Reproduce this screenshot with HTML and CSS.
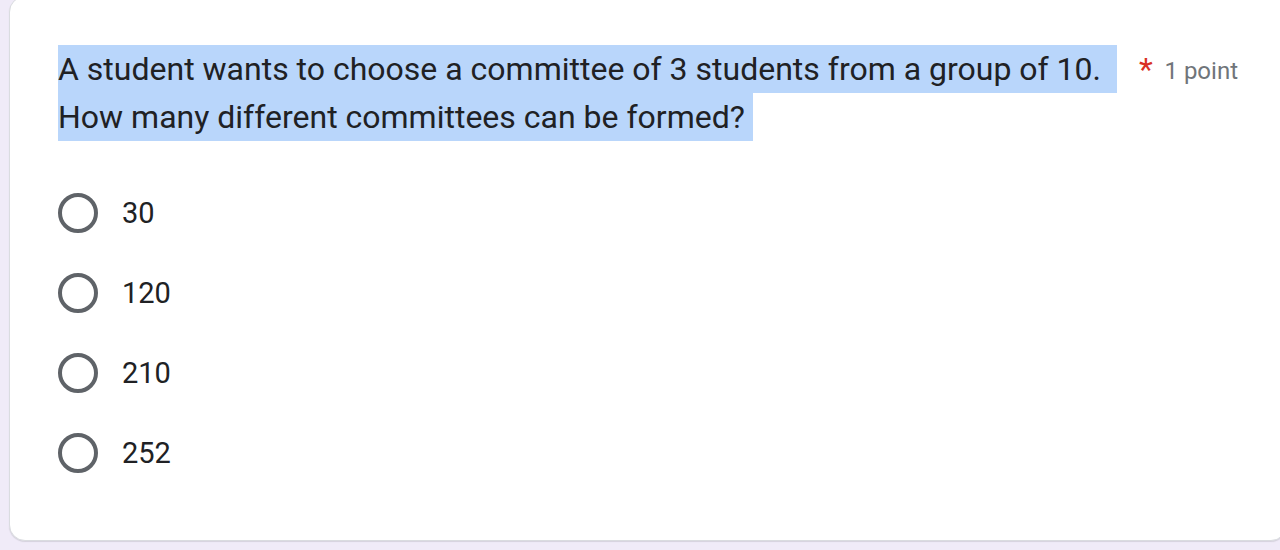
FILE: index.html
```html
<!DOCTYPE html>
<html lang="en">
<head>
<meta charset="utf-8">
<title>Question</title>
<link rel="stylesheet" href="styles.css">
</head>
<body>
<div class="card">
  <div class="header">
    <div class="title"><span class="hl">A student wants to choose a committee of 3 students from a group of 10.&nbsp;&nbsp;<br>How many different committees can be formed?&nbsp;</span></div>
    <span class="req">*</span>
    <span class="points">1 point</span>
  </div>
  <div class="options">
    <label class="option"><span class="radio"></span><span class="opt-text">30</span></label>
    <label class="option"><span class="radio"></span><span class="opt-text">120</span></label>
    <label class="option"><span class="radio"></span><span class="opt-text">210</span></label>
    <label class="option"><span class="radio"></span><span class="opt-text">252</span></label>
  </div>
</div>
</body>
</html>
```
FILE: styles.css
```css
html, body {
  margin: 0;
  padding: 0;
  background: #f0ebf8;
  overflow: hidden;
  width: 1280px;
  height: 550px;
}
body {
  font-family: Roboto, "Noto Sans", Arial, sans-serif;
  color: #202124;
}
.card {
  box-sizing: border-box;
  margin-left: 9px;
  margin-top: -4px;
  width: 1278px;
  background: #fff;
  border: 1px solid #dadce0;
  border-radius: 16px;
  padding: 48px 48px 47px 48px;
  box-shadow: 0 1px 1px rgba(60,64,67,0.15);
}
.header {
  display: flex;
  align-items: flex-start;
}
.title {
  flex: 0 0 auto;
  white-space: nowrap;
  font-size: 32px;
  line-height: 48px;
}
.hl {
  background: #b9d6fb;
  padding: 5.25px 0;
}
.req {
  color: #d93025;
  font-size: 32px;
  line-height: 48px;
  margin-left: 22px;
}
.points {
  color: #70757a;
  font-size: 24px;
  line-height: 48px;
  padding-top: 2px;
  margin-left: auto;
  white-space: nowrap;
}
.options {
  margin-top: 32px;
  display: flex;
  flex-direction: column;
}
.option {
  display: flex;
  align-items: center;
  height: 80px;
}
.radio {
  box-sizing: border-box;
  width: 40px;
  height: 40px;
  border: 4px solid #5f6368;
  border-radius: 50%;
  flex: none;
}
.opt-text {
  margin-left: 24px;
  font-size: 29px;
  line-height: 40px;
}
```
